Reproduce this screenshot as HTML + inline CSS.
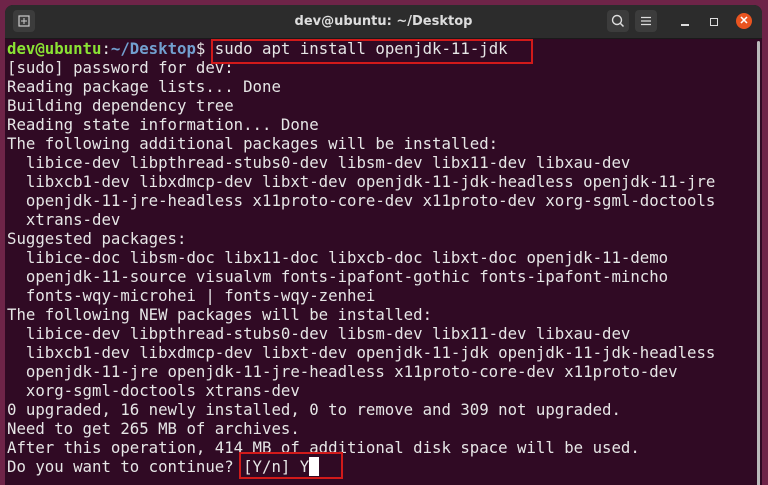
<!DOCTYPE html>
<html><head><style>
html,body{margin:0;padding:0;width:768px;height:479px;overflow:hidden;background:#6e2448;}
.win{position:absolute;left:5px;top:5px;width:757px;height:480px;background:#300a24;border-radius:8px 8px 0 0;overflow:hidden;}
.tb{position:absolute;left:0;top:0;width:757px;height:33px;background:#2c2c2c;border-bottom:1px solid #1a1a1a;}
.title{position:absolute;left:0;width:757px;top:0;text-align:center;color:#ddd;font:bold 13px "DejaVu Sans","Liberation Sans",sans-serif;line-height:34px;}
.btn{position:absolute;top:5px;width:22px;height:22px;background:#3c3c3c;border-radius:4px;}
pre{position:absolute;left:2px;top:34px;margin:0;font:15.7px/19px "DejaVu Sans Mono","Liberation Mono",monospace;color:#e6e6e6;}
.g{color:#8ae234;font-weight:bold}.b{color:#729fcf;font-weight:bold}
.box{position:absolute;border:2px solid #d11a1a;}
.cur{background:#fff;color:#300a24}
</style></head><body>
<div class="win">
<div class="tb">
<div class="btn" style="left:8px"></div>
<svg style="position:absolute;left:13px;top:10px" width="12" height="12"><rect x="1" y="1" width="10" height="10" fill="none" stroke="#ccc" stroke-width="1.2"/><path d="M6 3v6M3 6h6" stroke="#ccc"/></svg>
<div class="title">dev@ubuntu: ~/Desktop</div>
<div class="btn" style="left:602px"></div>
<svg style="position:absolute;left:606px;top:9px" width="14" height="14"><circle cx="6" cy="6" r="4.5" fill="none" stroke="#ddd" stroke-width="1.4"/><path d="M9.5 9.5l3 3" stroke="#ddd" stroke-width="1.5"/></svg>
<div class="btn" style="left:630px"></div>
<svg style="position:absolute;left:635px;top:11px" width="12" height="10"><path d="M1 1.5h10M1 5h10M1 8.5h10" stroke="#ddd" stroke-width="1.3"/></svg>
<div style="position:absolute;left:676px;top:19px;width:8px;height:2px;background:#ddd"></div>
<div style="position:absolute;left:705px;top:13px;width:6px;height:6px;border:1.3px solid #ddd"></div>
<div style="position:absolute;left:731px;top:8px;width:16px;height:16px;border-radius:50%;background:#e95420;color:#fff;font:bold 11px sans-serif;line-height:16px;text-align:center">✕</div>
</div>
<div style="position:absolute;left:752px;top:36px;width:3px;height:445px;background:#bbb;border-radius:2px"></div>
<pre><span class="g">dev@ubuntu</span>:<span class="b">~/Desktop</span>$ sudo apt install openjdk-11-jdk
[sudo] password for dev:
Reading package lists... Done
Building dependency tree
Reading state information... Done
The following additional packages will be installed:
  libice-dev libpthread-stubs0-dev libsm-dev libx11-dev libxau-dev
  libxcb1-dev libxdmcp-dev libxt-dev openjdk-11-jdk-headless openjdk-11-jre
  openjdk-11-jre-headless x11proto-core-dev x11proto-dev xorg-sgml-doctools
  xtrans-dev
Suggested packages:
  libice-doc libsm-doc libx11-doc libxcb-doc libxt-doc openjdk-11-demo
  openjdk-11-source visualvm fonts-ipafont-gothic fonts-ipafont-mincho
  fonts-wqy-microhei | fonts-wqy-zenhei
The following NEW packages will be installed:
  libice-dev libpthread-stubs0-dev libsm-dev libx11-dev libxau-dev
  libxcb1-dev libxdmcp-dev libxt-dev openjdk-11-jdk openjdk-11-jdk-headless
  openjdk-11-jre openjdk-11-jre-headless x11proto-core-dev x11proto-dev
  xorg-sgml-doctools xtrans-dev
0 upgraded, 16 newly installed, 0 to remove and 309 not upgraded.
Need to get 265 MB of archives.
After this operation, 414 MB of additional disk space will be used.
Do you want to continue? [Y/n] Y<span class="cur"> </span></pre>
</div>
<div class="box" style="left:211px;top:39px;width:318px;height:21px"></div>
<div class="box" style="left:239px;top:452px;width:100px;height:23px"></div>
</body></html>
